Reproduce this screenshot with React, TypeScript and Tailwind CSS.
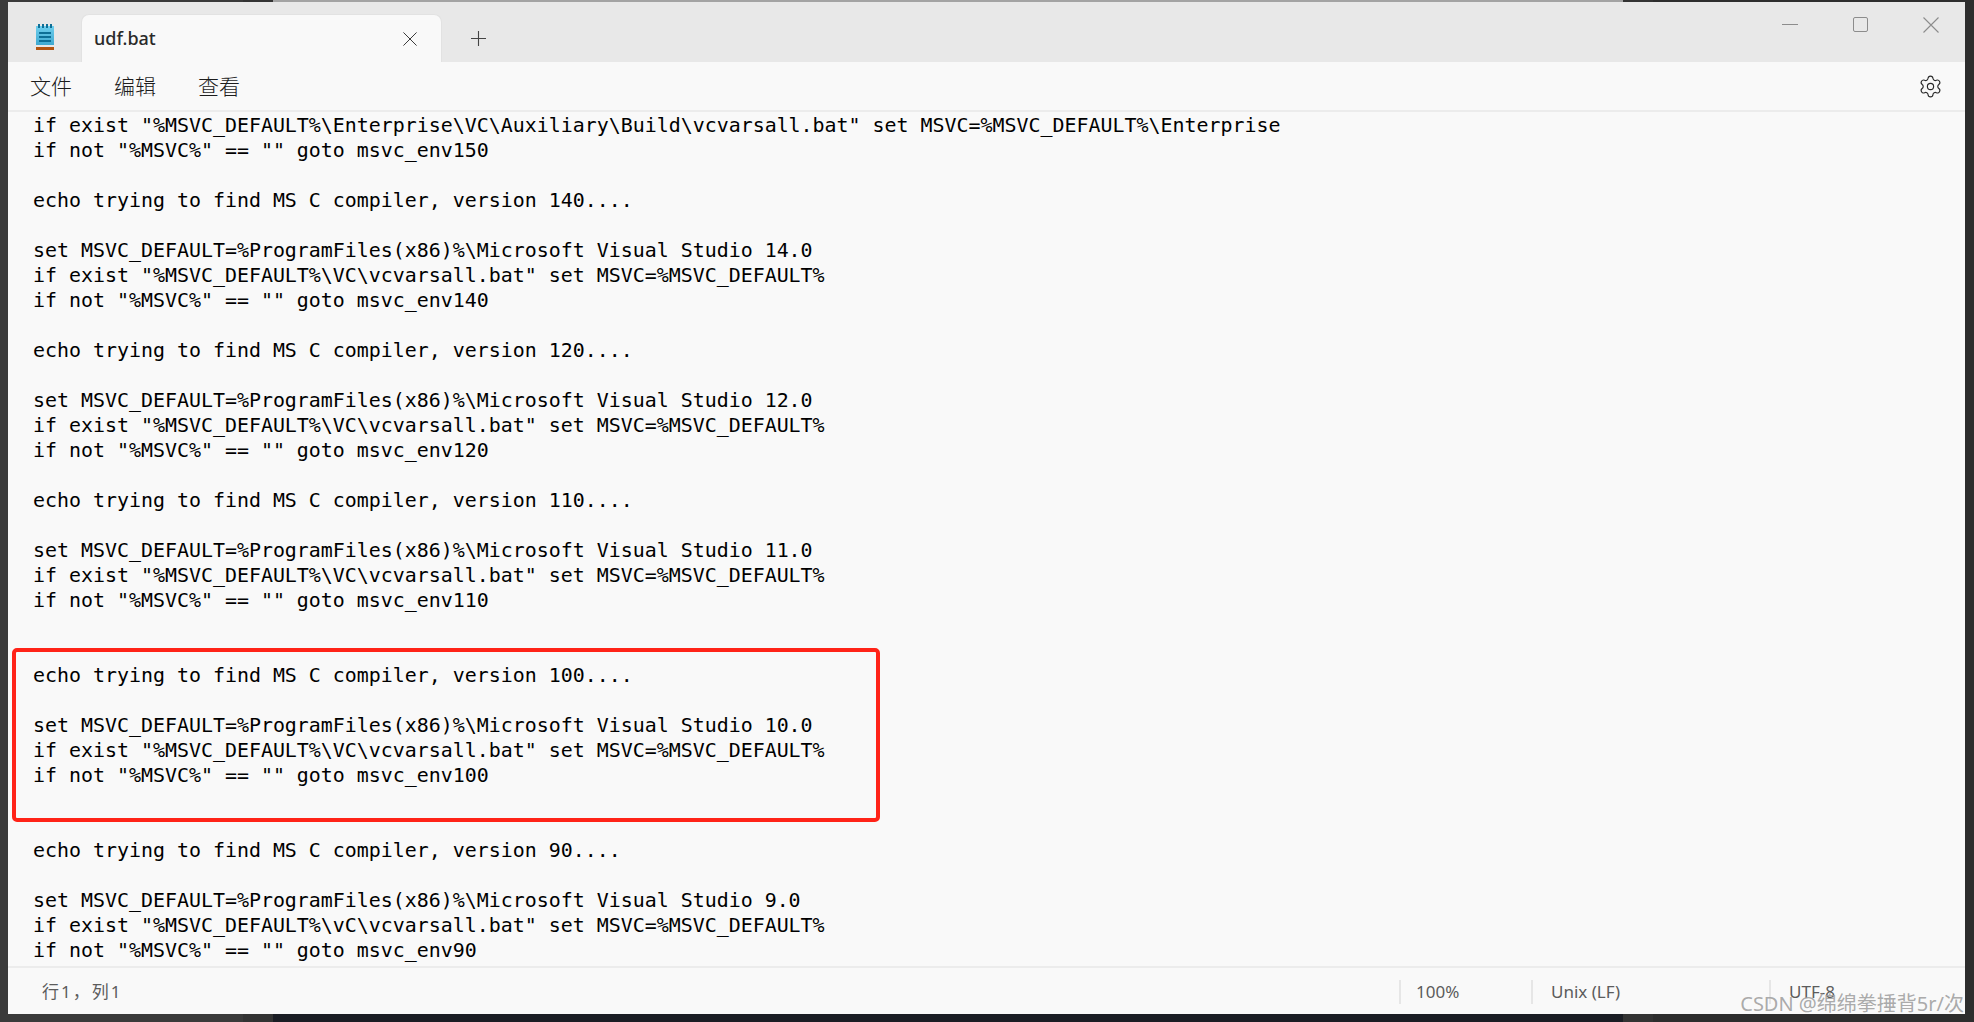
import React from "react";
import { Settings } from "lucide-react";

const LINES = [
  'if exist "%MSVC_DEFAULT%\\Enterprise\\VC\\Auxiliary\\Build\\vcvarsall.bat" set MSVC=%MSVC_DEFAULT%\\Enterprise',
  'if not "%MSVC%" == "" goto msvc_env150',
  "",
  "echo trying to find MS C compiler, version 140....",
  "",
  "set MSVC_DEFAULT=%ProgramFiles(x86)%\\Microsoft Visual Studio 14.0",
  'if exist "%MSVC_DEFAULT%\\VC\\vcvarsall.bat" set MSVC=%MSVC_DEFAULT%',
  'if not "%MSVC%" == "" goto msvc_env140',
  "",
  "echo trying to find MS C compiler, version 120....",
  "",
  "set MSVC_DEFAULT=%ProgramFiles(x86)%\\Microsoft Visual Studio 12.0",
  'if exist "%MSVC_DEFAULT%\\VC\\vcvarsall.bat" set MSVC=%MSVC_DEFAULT%',
  'if not "%MSVC%" == "" goto msvc_env120',
  "",
  "echo trying to find MS C compiler, version 110....",
  "",
  "set MSVC_DEFAULT=%ProgramFiles(x86)%\\Microsoft Visual Studio 11.0",
  'if exist "%MSVC_DEFAULT%\\VC\\vcvarsall.bat" set MSVC=%MSVC_DEFAULT%',
  'if not "%MSVC%" == "" goto msvc_env110',
  "",
  "",
  "echo trying to find MS C compiler, version 100....",
  "",
  "set MSVC_DEFAULT=%ProgramFiles(x86)%\\Microsoft Visual Studio 10.0",
  'if exist "%MSVC_DEFAULT%\\VC\\vcvarsall.bat" set MSVC=%MSVC_DEFAULT%',
  'if not "%MSVC%" == "" goto msvc_env100',
  "",
  "",
  "echo trying to find MS C compiler, version 90....",
  "",
  "set MSVC_DEFAULT=%ProgramFiles(x86)%\\Microsoft Visual Studio 9.0",
  'if exist "%MSVC_DEFAULT%\\vC\\vcvarsall.bat" set MSVC=%MSVC_DEFAULT%',
  'if not "%MSVC%" == "" goto msvc_env90',
];

const NotepadIcon = () => (
  <svg width="20" height="26" viewBox="0 0 20 26">
    <defs>
      <linearGradient id="pad" x1="0" y1="0" x2="0" y2="1">
        <stop offset="0" stopColor="#6fcfee" />
        <stop offset="1" stopColor="#3fa9d0" />
      </linearGradient>
    </defs>
    <rect x="1" y="2" width="18" height="19" fill="url(#pad)" />
    <rect x="1" y="23" width="18" height="3" fill="#b4540f" />
    <path d="M4 9h12M4 13h12M4 17h12" stroke="#0d6f96" strokeWidth="1.8" />
    <path d="M4 0v4M8 0v4M12 0v4M16 0v4" stroke="#0f6f96" strokeWidth="2" />
  </svg>
);

const Cross = ({ size, color }: { size: number; color: string }) => (
  <svg width={size} height={size} viewBox="0 0 16 16">
    <path d="M.5.5l15 15M15.5.5l-15 15" stroke={color} strokeWidth="1.1" fill="none" />
  </svg>
);

export default function App() {
  return (
    <div className="relative h-[1022px] w-[1974px] overflow-hidden bg-[#2d2d2d] pt-[2px] pr-[9px] pb-[8px] pl-[8px]">
      {/* What shows of the desktop around the window */}
      <div className="absolute inset-0 flex">
        <div className="w-[243px] bg-[#3a3a3a]" />
        <div className="w-[30px] bg-[#333333]" />
        <div className="flex w-[1350px] flex-col justify-between bg-[#1a1d24]">
          <div className="h-[3px] bg-[#a3a3a3]" />
        </div>
        <div className="w-[30px] bg-[#333333]" />
        <div className="flex-1 bg-[#2d2d2d]" />
      </div>

      <div className="relative flex h-full flex-col bg-[#f9f9f9] font-['Noto_Sans','Noto_Sans_CJK_SC',sans-serif]">
        {/* Title bar with tab */}
        <header className="flex h-[60px] shrink-0 items-end bg-[#e8e8e8]">
          <div className="flex h-[48px] w-[73px] items-center justify-center pb-[3px]">
            <NotepadIcon />
          </div>
          <div className="flex h-[48px] w-[361px] items-center justify-between rounded-t-lg border border-b-0 border-[#e2e2e2] bg-[#f9f9f9] pr-[24px] pl-[12px]">
            <span className="text-[18px] font-medium text-[#2a2a2a]">udf.bat</span>
            <Cross size={14} color="#333333" />
          </div>
          <div className="flex h-[48px] w-[72px] items-center justify-center">
            <svg width="15" height="15" viewBox="0 0 15 15">
              <path d="M7.5 0v15M0 7.5h15" stroke="#444444" strokeWidth="1.1" />
            </svg>
          </div>
          <div className="flex-1" />
          <div className="flex h-[60px] items-center gap-[55px] pr-[26px] pb-[15px]">
            <div className="h-px w-[16px] bg-[#8c8c8c]" />
            <div className="h-[15px] w-[15px] rounded-[2px] border border-[#8c8c8c]" />
            <Cross size={16} color="#8c8c8c" />
          </div>
        </header>

        {/* Menu bar */}
        <nav className="flex h-[50px] shrink-0 items-center justify-between border-b-2 border-[#ececec] pt-[1px] pr-[22px] pl-[22px]">
          <div className="flex items-center gap-[42px] text-[21px] font-light leading-none text-[#1c1c1c]">
            <span>文件</span>
            <span>编辑</span>
            <span>查看</span>
          </div>
          <Settings className="h-[25px] w-[25px] text-[#2a2a2a]" strokeWidth={1.1} />
        </nav>

        {/* Editor */}
        <main className="min-h-0 flex-1 overflow-hidden pt-[1px] pl-[25px] font-['DejaVu_Sans_Mono',monospace] text-[19.93px] leading-[25px] text-black">
          {LINES.map((line, i) => (
            <div key={i} className="h-[25px] whitespace-pre">
              {line}
            </div>
          ))}
        </main>

        {/* Status bar */}
        <footer className="flex h-[48px] shrink-0 items-center border-t-2 border-[#ececec] pt-[1px] text-[17px] leading-[24px] text-[#5c5c5c]">
          <span className="flex-1 pl-[34px] tracking-[2px]">行1，列1</span>
          <span className="h-[24px] w-[132px] border-l-2 border-[#e6e6e6] pl-[15px]">100%</span>
          <span className="h-[24px] w-[238px] border-l-2 border-[#e6e6e6] pl-[18px]">Unix (LF)</span>
          <span className="h-[24px] w-[196px] border-l-2 border-[#e6e6e6] pl-[18px]">UTF-8</span>
        </footer>

        {/* Annotation and watermark over the window */}
        <div className="absolute top-[646px] left-[4px] h-[174px] w-[868px] rounded-[5px] border-4 border-[#ff2318]" />
        <span className="absolute right-[1px] bottom-[-2px] text-[20px] leading-[24px] text-[#a0a0a0]/90">
          CSDN @绵绵拳捶背5r/次
        </span>
      </div>
    </div>
  );
}
